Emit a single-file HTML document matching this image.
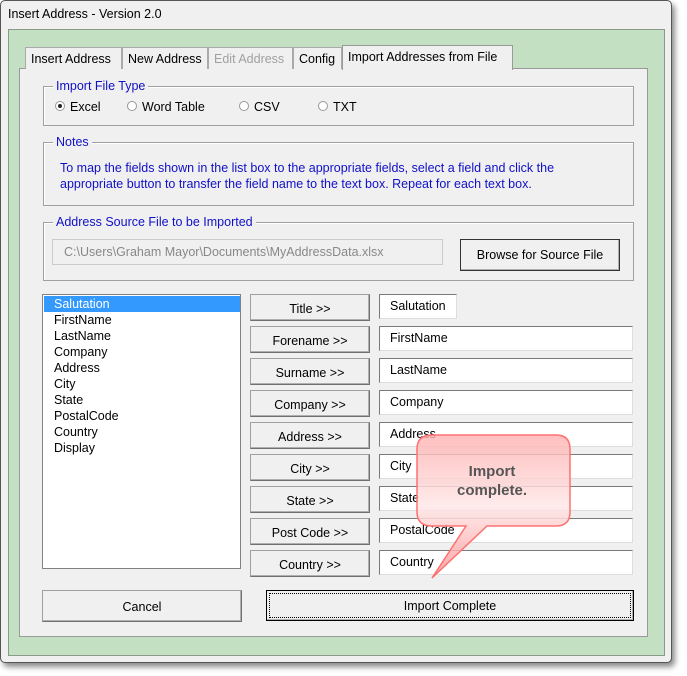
<!DOCTYPE html>
<html><head><style>
*{box-sizing:border-box;margin:0;padding:0}
body{width:687px;height:676px;background:#fff;font-family:"Liberation Sans",Arial,sans-serif;font-size:12px;color:#000;position:relative;overflow:hidden}
.a{position:absolute}
.win{left:0;top:0;width:672px;height:663px;background:#f0f0f0;border:1px solid #555;border-radius:5px;box-shadow:3px 4px 6px rgba(0,0,0,.45)}
.green{left:8px;top:29px;width:657px;height:627px;background:#c3e0c3;border:1px solid #8a9a8a}
.panel{left:19px;top:68px;width:629px;height:569px;background:#f0f0f0;border:1px solid #999}
.tab{top:47px;height:22px;border:1px solid #aaa;border-bottom:none;background:#f0f0f0;padding:4px 5px 0;font-size:12.5px}
.grp{border:1px solid #a0a0a0;box-shadow:inset 1px 1px 0 #fff}
.lbl{background:#f0f0f0;color:#1010c8;padding:0 3px;font-size:12.5px}
.btn{border:1px solid #a0a0a0;border-right-color:#707070;border-bottom-color:#707070;background:#f0f0f0;text-align:center;font-size:12.5px;box-shadow:inset -1px -1px 0 #b0b0b0}
.tb{background:#fff;border:1px solid #7a7a7a;border-right-color:#ddd;border-bottom-color:#ddd;padding:4px 0 0 10px;font-size:12.5px}
.rad{width:10px;height:10px;border:1px solid #999;border-radius:50%;background:#fff}
.li{left:54px;font-size:12.5px}
</style></head><body>
<div class="a win"></div>
<div class="a" style="left:8px;top:7px;font-size:12.5px">Insert Address - Version 2.0</div>
<div class="a green"></div>
<div class="a panel"></div>
<div class="a tab" style="left:25px;width:97px">Insert Address</div>
<div class="a tab" style="left:122px;width:86px">New Address</div>
<div class="a tab" style="left:208px;width:85px;color:#a0a0a0">Edit Address</div>
<div class="a tab" style="left:293px;width:49px">Config</div>
<div class="a tab" style="left:342px;top:45px;height:25px;width:171px;border-color:#999">Import Addresses from File</div>

<div class="a grp" style="left:43px;top:86px;width:591px;height:40px"></div>
<div class="a lbl" style="left:53px;top:79px">Import File Type</div>
<div class="a rad" style="left:55px;top:101px"><div style="width:4px;height:4px;background:#222;border-radius:50%;margin:2px"></div></div>
<div class="a" style="left:70px;top:100px;font-size:12.5px">Excel</div>
<div class="a rad" style="left:127px;top:101px"></div>
<div class="a" style="left:142px;top:100px;font-size:12.5px">Word Table</div>
<div class="a rad" style="left:239px;top:101px"></div>
<div class="a" style="left:254px;top:100px;font-size:12.5px">CSV</div>
<div class="a rad" style="left:318px;top:101px"></div>
<div class="a" style="left:333px;top:100px;font-size:12.5px">TXT</div>

<div class="a grp" style="left:43px;top:142px;width:591px;height:64px"></div>
<div class="a lbl" style="left:53px;top:135px">Notes</div>
<div class="a" style="left:60px;top:160px;color:#1010c8;font-size:12.5px;line-height:16px">To map the fields shown in the list box to the appropriate fields, select a field and click the<br>appropriate button to transfer the field name to the text box. Repeat for each text box.</div>

<div class="a grp" style="left:43px;top:222px;width:591px;height:59px"></div>
<div class="a lbl" style="left:53px;top:215px">Address Source File to be Imported</div>
<div class="a" style="left:52px;top:239px;width:391px;height:26px;border:1px solid #ccc;background:#f0f0f0;color:#888;padding:5px 0 0 11px;font-size:12.5px">C:\Users\Graham Mayor\Documents\MyAddressData.xlsx</div>
<div class="a btn" style="left:460px;top:239px;width:160px;height:32px;border:1px solid #333;padding-top:8px">Browse for Source File</div>

<div class="a" style="left:42px;top:294px;width:199px;height:275px;background:#fff;border:1px solid #828282"></div>
<div class="a" style="left:44px;top:296px;width:196px;height:16px;background:#3399ff"></div>
<div class="a li" style="top:297px;color:#fff">Salutation</div>
<div class="a li" style="top:313px">FirstName</div>
<div class="a li" style="top:329px">LastName</div>
<div class="a li" style="top:345px">Company</div>
<div class="a li" style="top:361px">Address</div>
<div class="a li" style="top:377px">City</div>
<div class="a li" style="top:393px">State</div>
<div class="a li" style="top:409px">PostalCode</div>
<div class="a li" style="top:425px">Country</div>
<div class="a li" style="top:441px">Display</div>

<div class="a btn" style="left:250px;top:294px;width:120px;height:27px;padding-top:7px">Title &gt;&gt;</div>
<div class="a btn" style="left:250px;top:326px;width:120px;height:27px;padding-top:7px">Forename &gt;&gt;</div>
<div class="a btn" style="left:250px;top:358px;width:120px;height:27px;padding-top:7px">Surname &gt;&gt;</div>
<div class="a btn" style="left:250px;top:390px;width:120px;height:27px;padding-top:7px">Company &gt;&gt;</div>
<div class="a btn" style="left:250px;top:422px;width:120px;height:27px;padding-top:7px">Address &gt;&gt;</div>
<div class="a btn" style="left:250px;top:454px;width:120px;height:27px;padding-top:7px">City &gt;&gt;</div>
<div class="a btn" style="left:250px;top:486px;width:120px;height:27px;padding-top:7px">State &gt;&gt;</div>
<div class="a btn" style="left:250px;top:518px;width:120px;height:27px;padding-top:7px">Post Code &gt;&gt;</div>
<div class="a btn" style="left:250px;top:550px;width:120px;height:27px;padding-top:7px">Country &gt;&gt;</div>

<div class="a tb" style="left:379px;top:294px;width:78px;height:25px">Salutation</div>
<div class="a tb" style="left:379px;top:326px;width:254px;height:25px">FirstName</div>
<div class="a tb" style="left:379px;top:358px;width:254px;height:25px">LastName</div>
<div class="a tb" style="left:379px;top:390px;width:254px;height:25px">Company</div>
<div class="a tb" style="left:379px;top:422px;width:254px;height:25px">Address</div>
<div class="a tb" style="left:379px;top:454px;width:254px;height:25px">City</div>
<div class="a tb" style="left:379px;top:486px;width:254px;height:25px">State</div>
<div class="a tb" style="left:379px;top:518px;width:254px;height:25px">PostalCode</div>
<div class="a tb" style="left:379px;top:550px;width:254px;height:25px">Country</div>

<div class="a btn" style="left:42px;top:590px;width:200px;height:32px;padding-top:9px">Cancel</div>
<div class="a btn" style="left:266px;top:590px;width:368px;height:31px;border:1px solid #000;padding-top:8px;outline:1px dotted #000;outline-offset:-4px">Import Complete</div>

<svg class="a" style="left:410px;top:430px" width="170" height="155">
<defs><linearGradient id="g" x1="0" y1="0" x2="0" y2="1"><stop offset="0" stop-color="#ffb0b0" stop-opacity=".8"/><stop offset=".5" stop-color="#ffe8e8" stop-opacity=".85"/><stop offset="1" stop-color="#ff9090" stop-opacity=".8"/></linearGradient></defs>
<path d="M22,5 H146 Q160,5 160,19 V82 Q160,96 146,96 H77 L22,148 L56,96 H22 Q7,96 7,82 V19 Q7,5 22,5 Z" fill="url(#g)" stroke="#ff7070" stroke-width="1.5"/>
<text x="82" y="46" text-anchor="middle" font-family="Liberation Sans" font-weight="bold" font-size="15" fill="#555">Import</text>
<text x="82" y="65" text-anchor="middle" font-family="Liberation Sans" font-weight="bold" font-size="15" fill="#555">complete.</text>
</svg>
</body></html>
